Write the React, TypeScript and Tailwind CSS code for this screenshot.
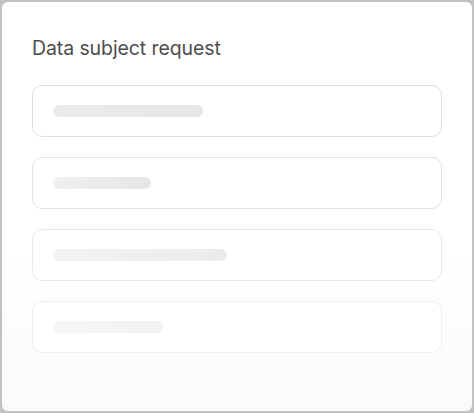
const rows = [
  { bar: 'w-[150px]', border: 'border-[#dedede]', fill: 'from-[#ebebeb] to-[#e6e6e6]' },
  { bar: 'w-[98px]', border: 'border-[#e2e2e2]', fill: 'from-[#efefef] to-[#e6e6e6]' },
  { bar: 'w-[174px]', border: 'border-[#e8e8e8]', fill: 'from-[#f3f3f3] to-[#ebebeb]' },
  { bar: 'w-[110px]', border: 'border-[#f0f0f0]', fill: 'from-[#f6f6f6] to-[#f2f2f2]' },
];

export default function App() {
  return (
    <div className="h-[413px] w-[474px] bg-[#c2c2c2] p-[2px]">
      <div
        className="flex h-full flex-col rounded-[6px] bg-gradient-to-b from-white from-60% to-[#fafafa] px-[30px] pt-[35px]"
        style={{ fontFamily: 'Inter, "Liberation Sans", sans-serif' }}
      >
        <h1 className="text-[19.5px] leading-[23px] tracking-[-0.1px] text-[#4d4d4d]">Data subject request</h1>
        <div className="mt-[25px] flex flex-col gap-[20px]">
          {rows.map((row, i) => (
            <div
              key={i}
              className={`flex h-[52px] w-[410px] items-center rounded-[10px] border bg-white pl-[20px] ${row.border}`}
            >
              <div className={`h-[12px] rounded-full bg-gradient-to-r ${row.fill} ${row.bar}`} />
            </div>
          ))}
        </div>
      </div>
    </div>
  );
}
